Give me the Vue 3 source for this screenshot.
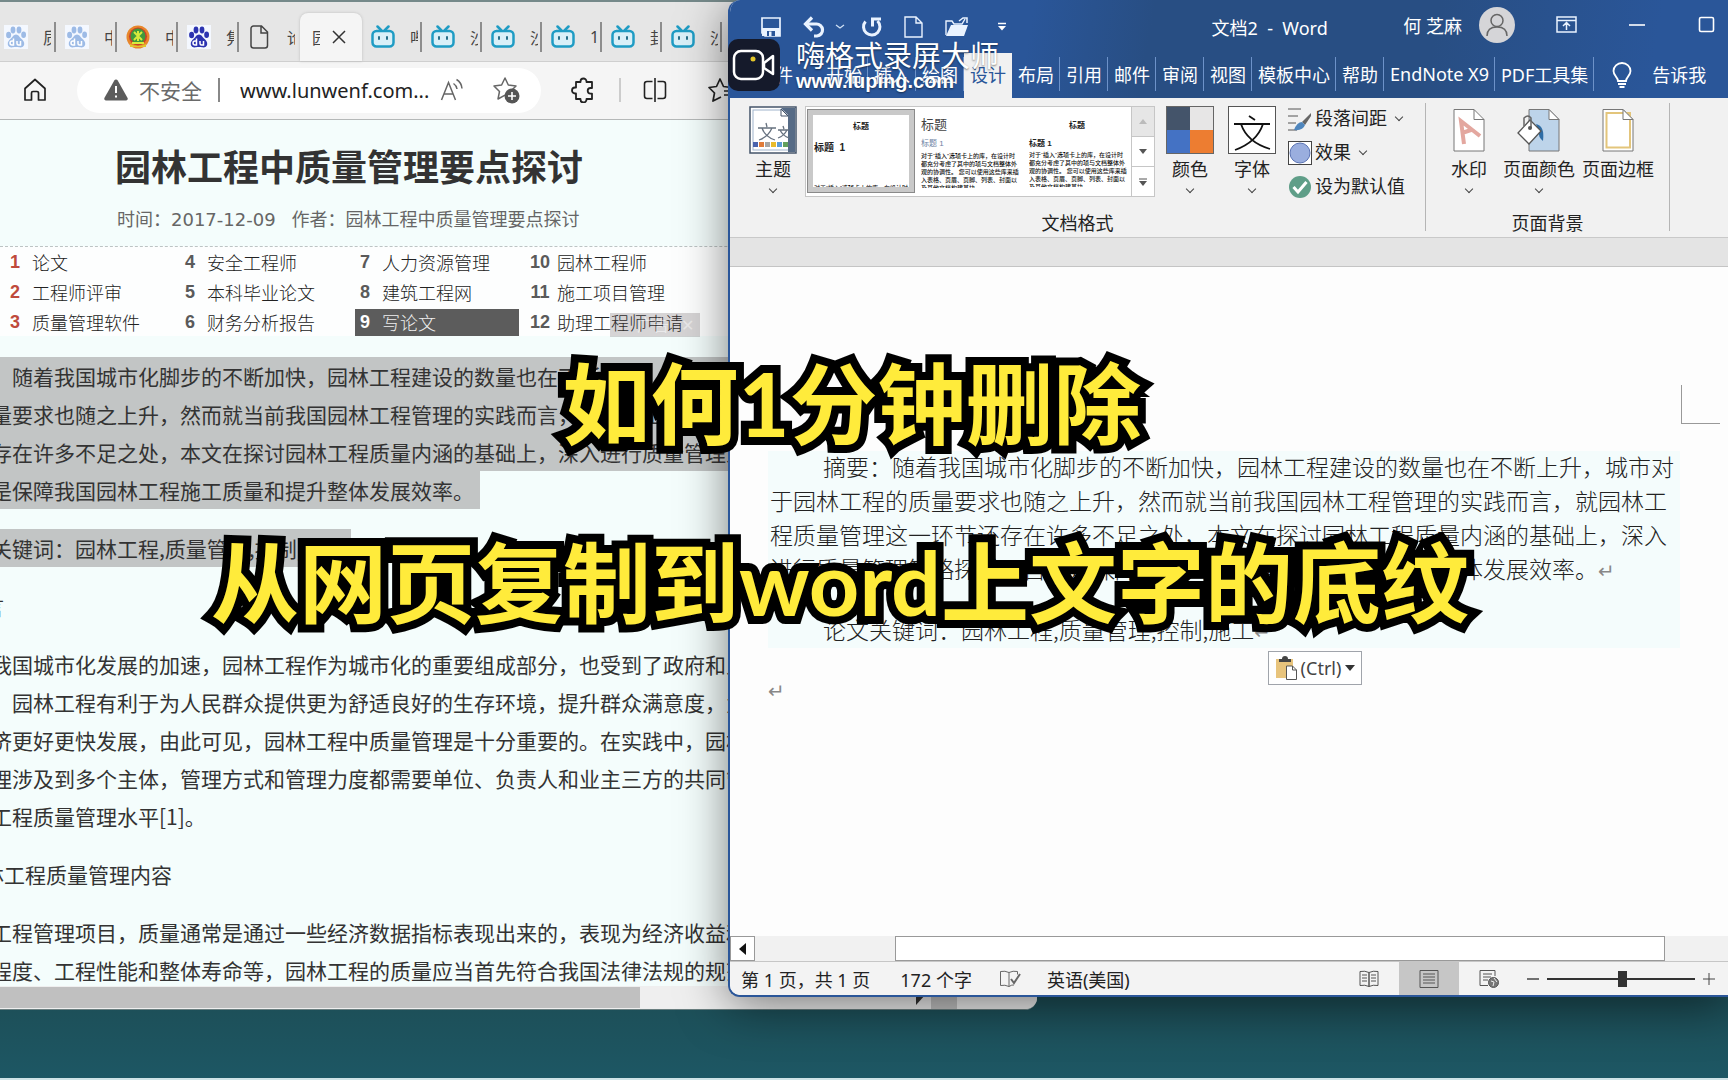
<script setup>
const leftTabs = [
  { icon: 'paw', tone: 'pale', label: '质' },
  { icon: 'paw', tone: 'pale', label: '中' },
  { icon: 'seal', label: '中' },
  { icon: 'paw', tone: 'deep', label: '隽' },
  { icon: 'page', label: '论' },
]
const rightTabs = ['哔', '沙', '沙', '1', '封', '沙']

const topics = [
  '论文', '工程师评审', '质量管理软件',
  '安全工程师', '本科毕业论文', '财务分析报告',
  '人力资源管理', '建筑工程网', '写论文',
  '园林工程师', '施工项目管理', '助理工程师申请',
]

const abstractLines = [
  '：随着我国城市化脚步的不断加快，园林工程建设的数量也在不断上升，城市对于园林',
  '量要求也随之上升，然而就当前我国园林工程管理的实践而言，就园林工程质量管理这一',
  '存在许多不足之处，本文在探讨园林工程质量内涵的基础上，深入进行质量管理策略探讨',
]
const introLines = [
  '我国城市化发展的加速，园林工程作为城市化的重要组成部分，也受到了政府和人民',
  '，园林工程有利于为人民群众提供更为舒适良好的生存环境，提升群众满意度，为',
  '济更好更快发展，由此可见，园林工程中质量管理是十分重要的。在实践中，园林',
  '理涉及到多个主体，管理方式和管理力度都需要单位、负责人和业主三方的共同管',
  '工程质量管理水平[1]。',
]
const contentLines = [
  '工程管理项目，质量通常是通过一些经济数据指标表现出来的，表现为经济收益和',
  '程度、工程性能和整体寿命等，园林工程的质量应当首先符合我国法律法规的规范',
]

const docLines = [
  '摘要：随着我国城市化脚步的不断加快，园林工程建设的数量也在不断上升，城市对',
  '于园林工程的质量要求也随之上升，然而就当前我国园林工程管理的实践而言，就园林工',
  '程质量管理这一环节还存在许多不足之处，本文在探讨园林工程质量内涵的基础上，深入',
]

const ribbonTabs = ['开始', '插入', '绘图', '设计', '布局', '引用', '邮件', '审阅', '视图', '模板中心', '帮助', 'EndNote X9', 'PDF工具集']
</script>

<template>
  <div class="desktop">
    <section class="browser">
      <div class="tabstrip">
        <button v-for="(t, i) in leftTabs" :key="'l' + i" class="tab wide">
          <svg v-if="t.icon === 'paw'" :class="['fav', t.tone]" viewBox="0 0 24 24">
            <rect width="24" height="24" fill="#f4f8ff" />
            <g fill="currentColor">
              <ellipse cx="4.600" cy="10" rx="2.500" ry="3.300" />
              <ellipse cx="9" cy="5" rx="2.400" ry="3.400" />
              <ellipse cx="15" cy="5" rx="2.400" ry="3.400" />
              <ellipse cx="19.600" cy="9.800" rx="2.400" ry="3.300" />
              <path d="M12 9.500c2.500 0 3.200 2.300 5 4 2 1.900 3.600 3.200 3.200 6-.4 2.600-3 3.200-5 2.800-2.200-.4-4.200-.4-6.400 0-2 .4-4.600-.2-5-2.800-.4-2.800 1.200-4.100 3.200-6 1.800-1.700 2.500-4 5-4z" />
            </g>
            <path d="M9.500 13.500v6.500H8a2 2 0 0 1 0-4h1.500M13 16v2.500c0 1 .5 1.500 1.500 1.500h2v-4" fill="none" stroke="#fff" stroke-width="1.500" />
          </svg>
          <svg v-else-if="t.icon === 'seal'" class="fav" viewBox="0 0 24 24">
            <circle cx="12" cy="12" r="11.500" fill="#e8862a" />
            <circle cx="12" cy="11.500" r="9" fill="#c9402a" />
            <circle cx="12" cy="11" r="7.500" fill="#3f9a3c" />
            <path d="M8 7l8 8M16 7l-8 8M12 6v10M6 18h12" stroke="#d8ea3c" stroke-width="2" fill="none" />
            <path d="M4 19q8 4 16 0v3H4z" fill="#e0c42f" />
          </svg>
          <svg v-else class="fav" viewBox="0 0 24 24" fill="none" stroke="#444" stroke-width="1.500">
            <path d="M5.500 1h8l6 6v13.500a2.500 2.500 0 0 1-2.500 2.500H5.500A2.500 2.500 0 0 1 3 20.500v-17A2.500 2.500 0 0 1 5.500 1zM13 1v7h7" />
          </svg>
          <span class="clip">{{ t.label }}</span>
        </button>
        <button class="tab active">
          <span class="clip">园</span>
          <svg class="x" viewBox="0 0 14 14"><path d="M1 1l12 12M13 1L1 13" stroke="#333" stroke-width="1.500" /></svg>
        </button>
        <button v-for="(t, i) in rightTabs" :key="'r' + i" class="tab">
          <svg class="fav" viewBox="0 0 24 24" fill="none" stroke="#1f9cc4" stroke-width="2.500" stroke-linecap="round">
            <rect x="1.500" y="6" width="21" height="15.500" rx="4" fill="#d9f0f8" />
            <path d="M6.500 1.500L10 5M17.500 1.500L14 5" />
            <path d="M8 12v2M16 12v2" stroke="#27708a" stroke-width="2" />
          </svg>
          <span class="clip">{{ t }}</span>
        </button>
      </div>

      <div class="toolbar">
        <button class="tool home" aria-label="主页">
          <svg width="24" height="24" viewBox="0 0 24 24" fill="none" stroke="#222" stroke-width="1.700" stroke-linejoin="round"><path d="M2 10.500L12 1.500l10 9V22h-6.500v-7a1.500 1.500 0 0 0-1.500-1.500h-4A1.500 1.500 0 0 0 8.500 15v7H2z" /></svg>
        </button>
        <div class="address">
          <svg width="26" height="24" viewBox="0 0 26 24"><path d="M13 1.500a2 2 0 0 1 1.700 1L24.600 20a1.800 1.800 0 0 1-1.600 2.500H3A1.800 1.800 0 0 1 1.400 20l9.900-17.500a2 2 0 0 1 1.700-1z" fill="#5c5c5c" /><path d="M13 8v7M13 17.500v2" stroke="#fff" stroke-width="2" /></svg>
          <label for="url">不安全</label>
          <i class="bar"></i>
          <input id="url" type="text" value="www.lunwenf.com..." readonly />
          <svg class="read" width="24" height="24" viewBox="0 0 24 24" fill="none" stroke="#666" stroke-width="1.500"><path d="M1.500 22L8.500 4.500 15.500 22M4 16h9M13.500 5.500q3 2 3.500 5.500M16.500 1.500q5 3 5.500 9" /></svg>
          <svg width="28" height="28" viewBox="0 0 28 28"><path d="M13 2l3.300 7 7.700 1-5.600 5.500L20 23l-7-3.800L6 23l1.500-7.500L2 10l7.600-1z" fill="none" stroke="#666" stroke-width="1.500" stroke-linejoin="round" /><circle cx="20" cy="20" r="7.500" fill="#555" /><path d="M20 16v8M16 20h8" stroke="#fff" stroke-width="1.600" /></svg>
        </div>
        <button class="tool ext" aria-label="扩展">
          <svg width="24" height="26" viewBox="0 0 24 26" fill="none" stroke="#222" stroke-width="1.800" stroke-linejoin="round"><path d="M5 5h4.500V4.500a3 3 0 0 1 6 0V5H21v6h-1.500a2.800 2.800 0 0 0 0 5.600H21V22h-5.500v.5a3 3 0 0 1-6 0V22H5v-5.500H4a3 3 0 0 1 0-6h1z" /></svg>
        </button>
        <i class="bar light"></i>
        <button class="tool split" aria-label="拆分">
          <svg width="24" height="24" viewBox="0 0 24 24" fill="none" stroke="#222" stroke-width="1.600"><path d="M9.500 3.500H4A2.500 2.500 0 0 0 1.500 6v12A2.500 2.500 0 0 0 4 20.500h5.500M14.500 3.500H20A2.500 2.500 0 0 1 22.500 6v12a2.500 2.500 0 0 1-2.500 2.500h-5.500M12 0v24" /></svg>
        </button>
        <button class="tool" aria-label="收藏夹">
          <svg width="28" height="26" viewBox="0 0 28 26" fill="none" stroke="#222" stroke-width="1.700" stroke-linejoin="round"><path d="M14 20l-8 4 1.500-8L2 10.500l7.500-1L13 2l3.500 7.500 7.500 1M17 14h10M17 18h10" /></svg>
        </button>
      </div>

      <article class="page">
        <h1>园林工程中质量管理要点探讨</h1>
        <p class="meta"><span>时间：2017-12-09</span><span>作者：园林工程中质量管理要点探讨</span></p>
        <div class="topics">
          <a v-for="(t, i) in topics" :key="t" href="#" :class="{ hot: i < 3, current: i === 8 }"><b>{{ i + 1 }}</b>{{ t }}</a>
          <span class="ad"><span>广告</span><span>✕</span></span>
        </div>
        <div class="body">
          <p>
            <span v-for="l in abstractLines" :key="l" class="line picked">{{ l }}</span>
            <span class="line"><mark>是保障我国园林工程施工质量和提升整体发展效率。</mark></span>
          </p>
          <p><span class="line"><mark>关键词：园林工程,质量管理,控制,施工</mark></span></p>
          <h2>言</h2>
          <p><span v-for="l in introLines" :key="l" class="line">{{ l }}</span></p>
          <h2>林工程质量管理内容</h2>
          <p><span v-for="l in contentLines" :key="l" class="line">{{ l }}</span></p>
        </div>
      </article>
      <div class="page-scroll">
        <i class="thumb"></i>
        <svg width="12" height="22" viewBox="0 0 12 22"><path d="M1 7h10L1 18z" fill="#333" /></svg>
        <i class="corner"></i>
      </div>
    </section>

    <section class="word">
      <header>
        <div class="titlebar">
          <div class="quick">
            <svg width="20" height="20" viewBox="0 0 20 20" class="save"><path d="M1 1h18v18H4l-3-3z" fill="none" stroke="#eaf3ff" stroke-width="1.700" /><path d="M1 11h18v8H1z" fill="#eaf3ff" /><path d="M6 19v-5h8v5" fill="#2a5699" /><path d="M8 14.500h2.500V19H8z" fill="#eaf3ff" /></svg>
            <svg width="23" height="22" viewBox="0 0 23 22" class="undo" fill="none" stroke="#eaf3ff" stroke-width="3.200"><path d="M2 8h11a6 6 0 0 1 1 12h-3" /><path d="M9 1.500L2.500 8 9 14.500" /></svg>
            <svg width="10" height="6" viewBox="0 0 10 6" class="chev"><path d="M1 1l4 3 4-3" fill="none" stroke="#cfe0f5" stroke-width="1.300" /></svg>
            <svg width="22" height="22" viewBox="0 0 22 22" class="redo" fill="none" stroke="#eaf3ff" stroke-width="3"><path d="M4.500 5.500a8.200 8.200 0 1 0 12-.5" /><path d="M11.500 10.500V3H20" /></svg>
            <svg width="19" height="22" viewBox="0 0 19 22" class="newdoc" fill="none" stroke="#eaf3ff" stroke-width="1.400"><path d="M1 1h11l6 6v14H1zM12 1v6h6" /></svg>
            <svg width="24" height="20" viewBox="0 0 24 20" class="open"><path d="M1 18V4h6l2 3h8l3-5" fill="none" stroke="#eaf3ff" stroke-width="1.400" /><path d="M6 8h17l-4 11H1z" fill="#eaf3ff" /><path d="M14 4l4-3h4v5" fill="none" stroke="#eaf3ff" stroke-width="1.500" /></svg>
            <svg width="10" height="10" viewBox="0 0 10 10"><path d="M1 1.500h8" stroke="#fff" stroke-width="1.500" /><path d="M1 4h8L5 8.500z" fill="#fff" /></svg>
          </div>
          <div class="caption-title">文档2&nbsp; -&nbsp; Word</div>
          <div class="account">
            <span class="user">何 芝麻</span>
            <svg width="36" height="36" viewBox="0 0 36 36" class="avatar"><circle cx="18" cy="18" r="18" fill="#d5d5d8" /><g fill="none" stroke="#666" stroke-width="1.500"><circle cx="18" cy="13.500" r="6" /><path d="M8 29c0-6 4-9 10-9s10 3 10 9" /></g></svg>
            <svg width="21" height="17" viewBox="0 0 21 17" fill="none" stroke="#eaf3ff" stroke-width="1.500" class="ribbon-toggle"><path d="M1 1h19v15H1zM1 4.500h19M10.500 14V7M7 10l3.500-3.500L14 10" /></svg>
            <svg width="16" height="4" viewBox="0 0 16 4" class="min"><path d="M0 2h16" stroke="#fff" stroke-width="1.600" /></svg>
            <svg width="18" height="18" viewBox="0 0 18 18"><rect x="1.500" y="1.500" width="14" height="14" rx="1.500" fill="none" stroke="#fff" stroke-width="1.600" /></svg>
          </div>
        </div>
        <nav class="tabs">
          <button class="file">文件</button>
          <button v-for="t in ribbonTabs" :key="t" :class="{ on: t === '设计' }">{{ t }}</button>
          <svg class="bulb" width="20" height="26" viewBox="0 0 20 26" fill="none" stroke="#fff" stroke-width="1.800"><path d="M6 19c0-4-4.500-5-4.500-10a8.500 8 0 0 1 17 0c0 5-4.500 6-4.500 10zM6 22h8M7.500 25h5" /></svg>
          <button class="tell">告诉我</button>
        </nav>
      </header>

      <div class="ribbon">
        <div class="group format">
          <div class="items">
            <button class="big theme">
              <svg width="48" height="48" viewBox="0 0 48 48"><rect x="1" y="1" width="46" height="46" fill="#fff" stroke="#44546a" stroke-width="1.500" /><rect x="4" y="4" width="40" height="40" fill="#fff" stroke="#9fb4cc" /><path d="M32 2h14v44h-7V9z" fill="#566b86" /><path d="M32 3v7h7z" fill="#fff" stroke="#44546a" /><g fill="none" stroke="#66717f" stroke-width="1.300"><path d="M9 22h18M17 17l1 4M23 22q-4 9-13 12M13 22q3 9 13 12" /><path d="M29 24h11M34 20l1 3M38 24q-3 6-9 8M31 24q3 6 9 8" /></g><path d="M4 36h5v5H4z" fill="#4a63ad" /><path d="M10 36h5v5h-5z" fill="#e07b39" /><path d="M16 36h5v5h-5z" fill="#a5a5a5" /><path d="M22 36h5v5h-5z" fill="#e8bb2c" /><path d="M28 36h5v5h-5z" fill="#5b9bd5" /><path d="M34 36h5v5h-5z" fill="#62a05c" /></svg>
              <span>主题</span><i class="dn"></i>
            </button>
            <div class="gallery">
              <div class="style first">
                <b class="t">标题</b>
                <b class="h">标题&nbsp; 1</b>
                <p>对于“插入”选项卡上的库，在设计时都充分考</p>
              </div>
              <div class="style second">
                <span class="t">标题</span>
                <span class="h">标题 1</span>
                <p>对于“插入”选项卡上的库，在设计时都充分考虑了其中的项与文档整体外观的协调性。 您可以使用这些库来插入表格、页眉、页脚、列表、封面以及其他文档构建基块。</p>
              </div>
              <div class="style third">
                <b class="t">标题</b>
                <b class="h">标题 1</b>
                <p>对于“插入”选项卡上的库，在设计时都充分考虑了其中的项与文档整体外观的协调性。 您可以使用这些库来插入表格、页眉、页脚、列表、封面以及其他文档构建基块。</p>
              </div>
              <div class="updown">
                <button class="off" aria-label="上一行"><svg width="8" height="5"><path d="M0 5h8L4 0z" fill="#bbb" /></svg></button>
                <button aria-label="下一行"><svg width="8" height="5"><path d="M0 0h8L4 5z" fill="#555" /></svg></button>
                <button aria-label="其他"><svg width="8" height="8"><path d="M0 1h8" stroke="#555" /><path d="M0 3h8L4 8z" fill="#555" /></svg></button>
              </div>
            </div>
            <button class="big">
              <svg width="48" height="48" viewBox="0 0 48 48"><path d="M0 0h24v24H0z" fill="#44546a" /><path d="M24 0h24v24H24z" fill="#e7e6e6" /><path d="M0 24h24v24H0z" fill="#4472c4" /><path d="M24 24h24v24H24z" fill="#ed7d31" /><rect x=".5" y=".5" width="47" height="47" fill="none" stroke="#666" /></svg>
              <span>颜色</span><i class="dn"></i>
            </button>
            <button class="big font">
              <svg width="48" height="48" viewBox="0 0 48 48"><rect x=".5" y=".5" width="47" height="47" fill="#fff" stroke="#555" /><path d="M6 18h36M21 10l6 4M35 18Q29 36 7 44M13 18q6 18 29 25" fill="none" stroke="#111" stroke-width="1.800" /></svg>
              <span>字体</span><i class="dn"></i>
            </button>
            <div class="small">
              <button>
                <svg width="24" height="24" viewBox="0 0 24 24"><path d="M0 2h13M0 9h10M0 16h8M0 23h9" stroke="#555" /><path d="M23 6l-9 9 3 3 6-9z" fill="#666" /><path d="M14 15q-5 0-8 8 9 1 11-5z" fill="#4f86bd" /></svg>
                <span>段落间距</span><i class="dn"></i>
              </button>
              <button>
                <svg width="24" height="24" viewBox="0 0 24 24"><rect x=".5" y=".5" width="23" height="23" fill="#fff" stroke="#444" /><circle cx="12" cy="12" r="10" fill="#9aaede" stroke="#5b74b5" /></svg>
                <span>效果</span><i class="dn"></i>
              </button>
              <button>
                <svg width="24" height="24" viewBox="0 0 24 24"><circle cx="12" cy="12" r="11" fill="#5f9e88" /><path d="M5.500 12l4.500 5 8.500-10" fill="none" stroke="#fff" stroke-width="3" /></svg>
                <span>设为默认值</span>
              </button>
            </div>
          </div>
          <div class="name">文档格式</div>
        </div>
        <div class="group background">
          <div class="items">
            <button class="big">
              <svg width="48" height="48" viewBox="0 0 48 48"><path d="M9 3.500h20l10 10V45H9z" fill="#fff" stroke="#777" /><path d="M29 3.500v10h10" fill="none" stroke="#777" /><path d="M19 38l-3-23 19 15M17 27l9-3" fill="none" stroke="#e3a79f" stroke-width="4" /></svg>
              <span>水印</span><i class="dn"></i>
            </button>
            <button class="big">
              <svg width="48" height="48" viewBox="0 0 48 48"><path d="M14 3.500h20l10 10V45H14z" fill="#bdd4ea" stroke="#777" /><path d="M34 3.500v10h10z" fill="#fff" stroke="#777" /><path d="M21 18q9 2 7 17-5-4-4-9z" fill="#2f6da5" /><path d="M3 27l12-13 11 11-12 13z" fill="#fff" stroke="#555" stroke-width="1.300" /><path d="M9 20v-8q4-4 7 0v10" fill="none" stroke="#666" stroke-width="1.500" /><circle cx="15" cy="22" r="2" fill="#555" /></svg>
              <span>页面颜色</span><i class="dn"></i>
            </button>
            <button class="big">
              <svg width="48" height="48" viewBox="0 0 48 48"><path d="M9 3.500h20l10 10V45H9z" fill="#fff" stroke="#777" /><path d="M12.500 7h23.500v34.500H12.500z" fill="none" stroke="#e3c57b" stroke-width="2" /><path d="M29 3.500v10h10z" fill="#fff" stroke="#777" /></svg>
              <span>页面边框</span>
            </button>
          </div>
          <div class="name">页面背景</div>
        </div>
      </div>
      <div class="ruler"></div>

      <div class="doc">
        <div class="crop-mark"></div>
        <div class="shaded">
          <p class="indent">
            <span v-for="l in docLines" :key="l" class="row">{{ l }}</span>
            <span class="row">进行质量管理策略探讨，目的是保障我国园林工程施工质量和提升整体发展效率。<i class="ret">↵</i></span>
          </p>
          <p class="indent"><span class="row">论文关键词：园林工程,质量管理,控制,施工<i class="ret">↵</i></span></p>
        </div>
        <p class="last"><i class="ret">↵</i></p>
        <button class="paste">
          <svg width="22" height="24" viewBox="0 0 22 24"><path d="M1 3h17v19H1z" fill="#e8c47c" /><path d="M4 6V3h3q0-3 3-3t3 3h3v3z" fill="#444" /><path d="M11.500 10h6l4 4v9.500h-10z" fill="#fff" stroke="#555" /><path d="M17.500 10v4h4" fill="none" stroke="#555" /></svg>
          (Ctrl)
          <svg width="10" height="6"><path d="M0 0h10L5 6z" fill="#333" /></svg>
        </button>
      </div>

      <div class="hscroll">
        <button aria-label="向左滚动"><svg width="8" height="12"><path d="M7 0v12L0 6z" fill="#111" /></svg></button>
        <i class="thumb"></i>
      </div>
      <footer>
        <span class="pages">第 1 页，共 1 页</span>
        <span class="count">172 个字</span>
        <svg class="proof" width="22" height="18" viewBox="0 0 22 18" fill="none" stroke="#666"><path d="M10 2.500Q6 .5 1.500 1.500v14Q6 14.500 10 16.500zM10 2.500Q14 .5 18.500 1.500v3M10 16.500q3-2 5-1.500" /><path d="M12 9l3 4 6-9" stroke-width="2" /></svg>
        <span class="lang">英语(美国)</span>
        <button class="view" aria-label="阅读视图"><svg width="20" height="18" viewBox="0 0 20 18" fill="none" stroke="#555"><path d="M10 2.500Q6 .5 1 1.500v14q5-1 9 1zM10 2.500q4-2 9-1v14q-5-1-9 1zM3 5h5M3 8h5M3 11h5M12 5h5M12 8h5M12 11h5" /></svg></button>
        <button class="view on" aria-label="页面视图"><svg width="20" height="18" viewBox="0 0 20 18" fill="none" stroke="#555"><path d="M1 .5h18v17H1zM4 4h12M4 7h12M4 10h12M4 13h12" /></svg></button>
        <button class="view" aria-label="Web 版式"><svg width="20" height="18" viewBox="0 0 20 18" fill="none" stroke="#555"><path d="M16 6V.5H1v15h8M4 4h9M4 7h8M4 10h5" /><circle cx="14.500" cy="12.500" r="5" fill="#777" /><path d="M12 11l3 1-1 4M15 8l3 4" stroke="#eee" /></svg></button>
        <button class="zoom" aria-label="缩小"><svg width="12" height="12"><path d="M0 6h12" stroke="#444" stroke-width="1.500" /></svg></button>
        <input type="range" min="0" max="100" value="51" aria-label="缩放" />
        <button class="zoom" aria-label="放大"><svg width="12" height="12"><path d="M0 6h12M6 0v12" stroke="#444" /></svg></button>
      </footer>
    </section>

    <div class="brand">
      <svg width="52" height="52" viewBox="0 0 52 52"><rect width="52" height="52" rx="10" fill="#151a2b" /><rect x="6" y="12" width="29" height="28" rx="7" fill="none" stroke="#fff" stroke-width="2.500" /><path d="M36 24l9-7v18l-9-6z" fill="none" stroke="#fff" stroke-width="2.500" stroke-linejoin="round" /><circle cx="25" cy="20" r="2.500" fill="#e4c62a" /></svg>
      <div><span>嗨格式录屏大师</span><b>www.luping.com</b></div>
    </div>

    <div class="headline">
      <div class="one">如何1分钟删除</div>
      <div class="two">从网页复制到word上文字的底纹</div>
    </div>
  </div>
</template>

<style>
body { background: #1d5561; }
</style>

<style scoped>
* { box-sizing: border-box; }
.desktop {
  position: relative;
  min-height: 100vh;
  overflow: hidden;
  background: linear-gradient(#75898a 0, #75898a 30px, #1d4f58 93%, #1d5764 100%);
  border-bottom: 2px solid #cfe3e6;
  font-family: "Noto Sans", "Noto Sans CJK SC", sans-serif;
}
button {
  border: 0;
  padding: 0;
  background: none;
  font: inherit;
  color: inherit;
}
p, h1, h2 { margin: 0; }
svg { flex: none; display: block; }
i { font-style: normal; }

/* browser window */
.browser {
  position: absolute;
  left: 0;
  top: 2px;
  bottom: 68px;
  width: 60%;
  display: flex;
  flex-direction: column;
  overflow: hidden;
  border-bottom: 1px solid #6a7f80;
  border-radius: 0 0 12px 0;
  background: #f4fdfc;
}
.tabstrip {
  flex: none;
  display: flex;
  align-items: flex-end;
  height: 60px;
  padding-right: 200px;
  margin-left: -5px;
  background: #e6e6e6;
  border-bottom: 1px solid #cfcfcf;
}
.tab {
  position: relative;
  flex: none;
  display: flex;
  align-items: center;
  gap: 15px;
  width: 60px;
  height: 48px;
  padding-left: 9px;
  font-size: 16px;
  color: #444;
}
.tab::after {
  content: "";
  position: absolute;
  right: 0;
  top: 9px;
  height: 30px;
  border-right: 2px solid #8d8d8d;
}
.tab.wide { width: 61px; }
.tab.wide:nth-child(5)::after, .tab.active::after { display: none; }
.tab.active {
  width: 62px;
  gap: 12px;
  padding-left: 12px;
  background: #f5f5f5;
  border-radius: 8px 8px 0 0;
  box-shadow: 0 0 3px #bbb;
}
.fav { width: 24px; height: 24px; }
.pale { color: #9dbbe6; }
.deep { color: #2c33b0; }
.x { width: 14px; height: 14px; }
.clip { width: 8px; overflow: hidden; white-space: nowrap; text-align: left; }
.toolbar {
  flex: none;
  display: flex;
  align-items: center;
  height: 58px;
  padding-bottom: 1px;
  background: #f5f5f5;
  border-bottom: 1px solid #b5b8b8;
}
.home { margin: 0 30px 0 23px; }
.address {
  flex: none;
  display: flex;
  align-items: center;
  width: 464px;
  height: 45px;
  padding-left: 26px;
  border-radius: 23px;
  background: #fff;
}
.address label { margin: 0 16px 0 10px; font-size: 21px; color: #6a6a6a; }
.bar { width: 2px; height: 24px; background: #888; }
.bar.light { background: #ccc; }
.address input {
  width: 194px;
  margin: 0 6px 0 20px;
  padding: 0;
  border: 0;
  background: none;
  font: 20px "Noto Sans", "Noto Sans CJK SC", sans-serif;
  color: #222;
}
.read { margin-right: 28px; }
.ext { margin: 0 24px 0 30px; }
.split { margin: 0 40px 0 22px; }
.page { flex: 1; min-height: 0; overflow: hidden; }
.page h1 {
  padding: 18px 0 0 115px;
  font: 700 36px/54px "Noto Sans CJK SC", sans-serif;
  color: #333;
}
.meta {
  display: flex;
  gap: 16px;
  padding: 14px 0 12px 117px;
  font: 18px/28px "DejaVu Sans", "Noto Sans CJK SC", sans-serif;
  color: #666;
}
.topics {
  position: relative;
  display: grid;
  grid-template: repeat(3, 27px) / repeat(4, 164px);
  grid-auto-flow: column;
  gap: 3px 11px;
  padding: 2px 0 0 5px;
  background: #fdfefe;
  border-top: 1px dashed #bcc4c4;
}
.topics a {
  display: flex;
  align-items: center;
  font: 300 18px/27px "Noto Sans CJK SC", sans-serif;
  white-space: nowrap;
  color: #222;
  text-decoration: none;
}
.topics b {
  width: 20px;
  margin-right: 7px;
  text-align: center;
  font: 700 18px/27px "Liberation Sans", sans-serif;
  color: #5a5a5a;
}
.topics a.hot b { color: #bf4a3c; }
.topics a.current { background: #5c5c5c; color: #eee; }
.topics a.current b { color: #fff; }
.ad {
  position: absolute;
  left: 610px;
  bottom: -1px;
  display: flex;
  justify-content: flex-end;
  gap: 12px;
  width: 90px;
  height: 24px;
  padding-right: 6px;
  background: rgba(90, 80, 85, .24);
  font-size: 16px;
  line-height: 24px;
  color: rgba(255, 255, 255, .5);
}
.body {
  margin: 21px 0 0 -9px;
  font: 21px/38px "Noto Sans CJK SC", sans-serif;
  color: #333;
}
.body p, .body h2 { margin-bottom: 20px; }
.body h2 { font: inherit; text-indent: -8px; }
.line { display: block; height: 38px; white-space: nowrap; }
.picked { background: #c2c5c5; }
mark { display: inline-block; height: 38px; padding-right: 6px; background: #c2c5c5; color: inherit; }
.page-scroll { flex: none; display: flex; height: 23px; padding-top: 1px; background: #efefef; }
.page-scroll .thumb { width: 640px; height: 21px; margin-right: 275px; background: #c0c0c0; }
.page-scroll .corner { width: 26px; margin-left: 4px; background: #c4c4c4; }

/* word window */
.word {
  position: absolute;
  left: 728px;
  right: 0;
  top: 0;
  bottom: 81px;
  display: flex;
  flex-direction: column;
  overflow: hidden;
  border: solid #2a5699;
  border-width: 0 0 2px 2px;
  border-radius: 12px 0 0 12px;
  background: #fdfdfd;
  box-shadow: 0 8px 48px rgba(0, 0, 0, .5);
  font-size: 18px;
  color: #222;
}
.word header {
  flex: none;
  height: 98px;
  background: linear-gradient(100deg, #2a5699 30%, #284e83 42%, #284e83 70%, #2a5699 92%);
  color: #fff;
}
.titlebar { display: flex; align-items: center; height: 53px; }
.quick { display: flex; align-items: center; width: 290px; padding-left: 31px; }
.save { margin-right: 22px; }
.undo { margin-right: 9px; }
.chev { margin-right: 16px; }
.redo { margin-right: 21px; }
.newdoc { margin-right: 22px; }
.open { margin-right: 28px; }
.caption-title { flex: 1; padding-left: 116px; text-align: center; }
.account { display: flex; align-items: center; padding: 0 12px 4px 0; }
.user { margin-right: 17px; }
.avatar { margin-right: 41px; }
.ribbon-toggle { margin-right: 52px; }
.min { margin-right: 53px; }
.caption-title, .user, .tabs { white-space: nowrap; }
.tabs { display: flex; height: 45px; padding-left: 27px; }
.tabs button { position: relative; padding: 0 6px 4px; }
.tabs button::after {
  content: "";
  position: absolute;
  right: 0;
  top: 4px;
  height: 34px;
  border-right: 1px solid #6d92c9;
}
.tabs button.file { padding-left: 0; margin-right: 21px; }
.tabs .file::after, .tabs .tell::after, .tabs .on::after { display: none; }
.tabs button.on { background: #f1f1f1; color: #2a5699; }
.tabs .bulb { margin: 9px 20px 0 18px; }
.tabs button.tell { padding: 0 0 4px; }
.ribbon {
  flex: none;
  display: flex;
  height: 140px;
  padding-top: 5px;
  background: #f1f1f1;
  border-bottom: 1px solid #c9c9c9;
}
.group {
  display: flex;
  flex-direction: column;
  justify-content: space-between;
  height: 128px;
  border-right: 1px solid #b5b5b5;
}
.group .items { display: flex; padding-top: 3px; white-space: nowrap; }
.format { width: 696px; }
.background { width: 244px; }
.name { text-align: center; line-height: 16px; }
.big { display: flex; flex-direction: column; align-items: center; min-width: 48px; }
.big span { line-height: 30px; }
.theme { margin: 0 8px 0 19px; }
.font { margin: 0 12px 0 14px; }
.background .items { padding-left: 19px; gap: 7px; }
.background .big:first-child { margin-right: 3px; }
.dn {
  width: 6px;
  height: 6px;
  margin-top: 2px;
  border: solid #444;
  border-width: 0 1px 1px 0;
  transform: rotate(45deg);
}
.small { display: flex; flex-direction: column; gap: 9px; }
.small button { display: flex; align-items: center; gap: 3px; height: 25px; line-height: 22px; }
.small button span { padding-bottom: 2px; }
.small .dn { margin: -3px 0 0 6px; }
.gallery {
  display: flex;
  width: 350px;
  height: 91px;
  margin-right: 11px;
  background: #fff;
  border: 1px solid #c6c6c6;
}
.style { width: 108px; height: 84px; padding: 6px; margin-top: 2px; overflow: hidden; font-family: "Liberation Sans", "Noto Sans CJK SC", sans-serif; }
.style p {
  width: 98px;
  height: 36px;
  overflow: hidden;
  font-size: 6px;
  line-height: 8px;
  font-weight: 500;
  white-space: normal;
  color: #111;
}
.style .t, .style .h { display: block; }
.style.first { margin-left: 1px; border: 6px solid #c9c9c9; outline: 1px solid #8a8a8a; outline-offset: -1px; padding: 0 1px; }
.first .t { padding-top: 6px; text-align: center; font-size: 8px; line-height: 12px; }
.first .h { padding: 9px 0 30px; font-size: 10px; line-height: 12px; }
.second .t { font-size: 13px; line-height: 20px; color: #444; }
.second .h { font-size: 8px; line-height: 17px; color: #6d83a3; }
.third .t { text-align: center; font-size: 8px; line-height: 22px; }
.third .h { font-size: 8px; line-height: 14px; }
.updown { display: flex; flex-direction: column; width: 23px; margin-left: auto; border-left: 1px solid #c6c6c6; }
.updown button { flex: 1; display: grid; place-items: center; }
.updown button + button { border-top: 1px solid #c6c6c6; }
.updown .off { background: #e6e6e6; }
.ruler { flex: none; height: 29px; background: #e4e4e4; border-bottom: 1px solid #c4c4c4; }
.doc { position: relative; flex: 1; min-height: 0; padding: 118px 8px 0 38px; overflow: hidden; }
.crop-mark { width: 39px; height: 39px; margin-left: auto; border: solid #999; border-width: 0 0 1px 1px; }
.shaded {
  display: flex;
  flex-direction: column;
  gap: 27px;
  margin: 27px 40px 25px 0;
  padding-left: 2px;
  background: #f4fcfc;
}
.shaded, .last { font: 300 23px/30px "Noto Sans CJK SC", sans-serif; color: #222; }
.row { display: block; height: 34px; white-space: nowrap; }
.indent .row:first-child { padding-left: 53px; }
.ret { font: 20px/30px "DejaVu Sans", sans-serif; color: #888; }
.paste {
  position: absolute;
  left: 538px;
  top: 384px;
  display: flex;
  align-items: center;
  justify-content: center;
  gap: 4px;
  width: 94px;
  height: 34px;
  background: #fff;
  border: 1px solid #a0a4ab;
  color: #444;
}
.hscroll { flex: none; display: flex; height: 25px; background: #f1f1f1; }
.hscroll button { width: 25px; height: 25px; display: grid; place-items: center; background: #fff; border: 1px solid #999; }
.hscroll .thumb { flex: 1; height: 25px; margin: 0 63px 0 140px; background: #fff; border: 1px solid #999; }
footer {
  flex: none;
  display: flex;
  align-items: center;
  height: 34px;
  padding: 0 13px 0 11px;
  background: #f3f3f3;
  border-top: 1px solid #c6c6c6;
  white-space: nowrap;
}
.count { margin: 0 27px 0 30px; }
.lang { margin: 0 auto 0 26px; }
.view { display: grid; place-items: center; width: 60px; height: 33px; }
.view.on { background: #c6c6c6; }
.view:nth-of-type(3) { margin-right: 8px; }
footer input {
  appearance: none;
  width: 148px;
  height: 16px;
  margin: 0 8px;
  background: linear-gradient(#333, #333) center / 100% 2px no-repeat;
}
footer input::-webkit-slider-thumb { appearance: none; width: 9px; height: 16px; background: #333; }

/* overlays */
.brand {
  position: absolute;
  left: 728px;
  top: 39px;
  display: flex;
  gap: 16px;
  color: #fff;
  text-shadow: 0 1px 2px rgba(0, 0, 0, .5);
}
.brand span { display: block; font-size: 29px; line-height: 34px; white-space: nowrap; }
.brand b { display: block; font: 700 20px/16px "Liberation Sans", sans-serif; }
.headline {
  position: absolute;
  left: 0;
  right: 0;
  top: 314px;
  font: 700 88px/179px Lato, "Noto Sans CJK SC", sans-serif;
  white-space: nowrap;
  text-align: center;
  color: #ffeb3b;
  -webkit-text-stroke: 16px #000;
  paint-order: stroke fill;
  pointer-events: none;
}
.one { padding-right: 24px; }
.two { padding-right: 48px; }
</style>
